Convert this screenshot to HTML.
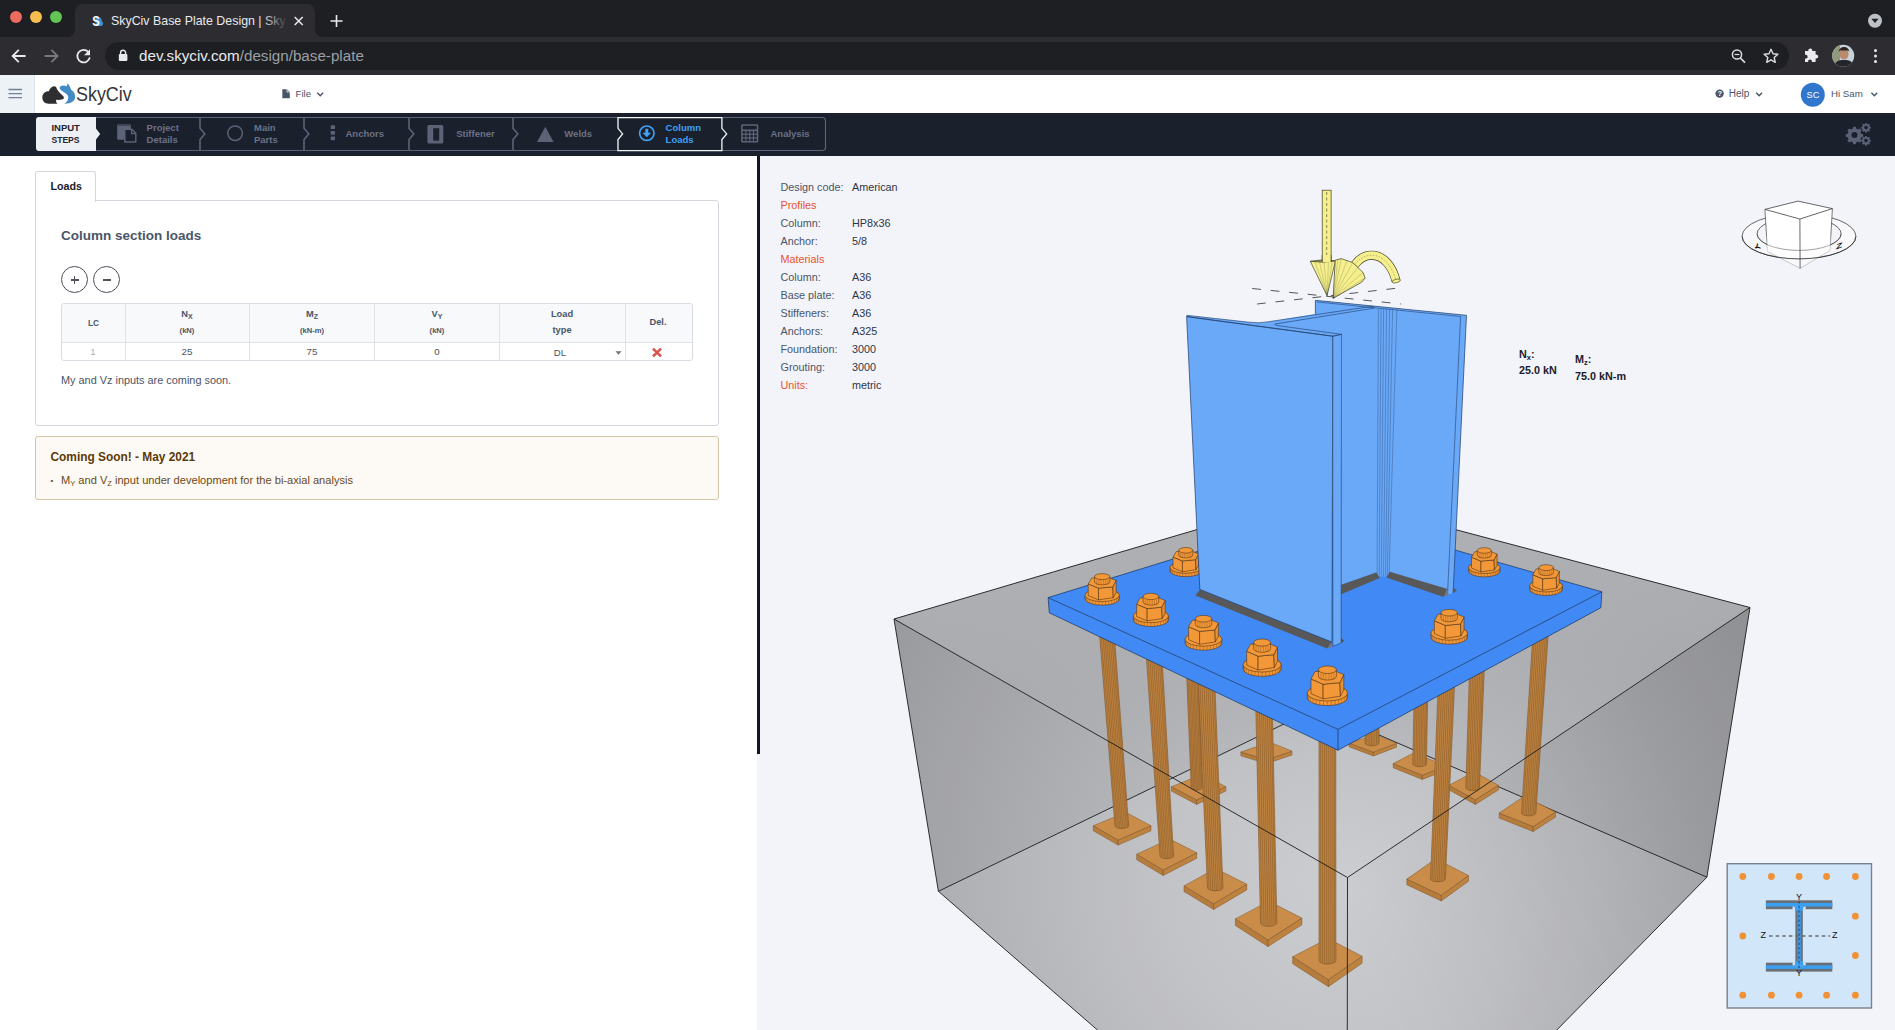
<!DOCTYPE html>
<html lang="en">
<head>
<meta charset="utf-8">
<title>SkyCiv Base Plate Design | SkyCiv</title>
<style>
*{box-sizing:border-box;margin:0;padding:0}
html,body{width:1895px;height:1030px;overflow:hidden;background:#fff}
body{font-family:"Liberation Sans","DejaVu Sans",sans-serif;color:#2d3748;position:relative}
.abs{position:absolute}
.t{position:absolute;white-space:nowrap;line-height:1}
/* browser chrome */
#frame{left:0;top:0;width:1895px;height:37px;background:#1e1f22}
#tab{left:75px;top:4px;width:240px;height:33px;background:#2d2d31;border-radius:8px 8px 0 0}
#toolbar{left:0;top:37px;width:1895px;height:38px;background:#2d2d31}
#omni{left:105px;top:42px;width:1683.5px;height:28px;border-radius:14px;background:#1e1f22}
.tl{position:absolute;top:11px;width:12px;height:12px;border-radius:50%}
/* app header */
#hdr{left:0;top:75px;width:1895px;height:38px;background:#fff}
#ham{left:0;top:75px;width:35px;height:38px;background:#edf2f7;border-right:1px solid #dbe2ea}
#steps{left:0;top:113px;width:1895px;height:43px;background:#1a202c}
/* panels */
#left{left:0;top:156px;width:757px;height:874px;background:#fff}
#right{left:757px;top:156px;width:1138px;height:874px;background:#f3f4f9}
#vbar{left:757px;top:156px;width:3px;height:598px;background:#111722}
</style>
</head>
<body>
<!-- ===== browser chrome ===== -->
<div id="frame" class="abs"></div>
<div class="tl" style="left:10px;background:#ed6a5e"></div>
<div class="tl" style="left:30px;background:#f4bf4f"></div>
<div class="tl" style="left:50px;background:#61c554"></div>
<div id="tab" class="abs"></div>
<div id="toolbar" class="abs"></div>
<div id="omni" class="abs"></div>
<!--CHROME-ICONS-->
<svg class="abs" style="left:0;top:0" width="1895" height="75" viewBox="0 0 1895 75">
 <!-- tab foot curves -->
 <path d="M67 37h8v-8a8 8 0 0 1-8 8z" fill="#2d2d31"/><path d="M323 37h-8v-8a8 8 0 0 0 8 8z" fill="#2d2d31"/>
 <!-- favicon -->
 <path d="M95.300 18.200c1.500-1.600 4.200-1.700 5.400-.2.800 1 1 2.200 1.200 3 1.200 1 1.500 2.800.8 4-.6 1-1.600 1.100-2.600 1.100h-4.500z" fill="#3d8fd1"/>
 <text x="92.300" y="26" font-family="Liberation Sans, sans-serif" font-weight="700" font-size="14" fill="#fff" transform="translate(92.300 0) scale(.8 1) translate(-92.300 0)">S</text>
 <!-- tab title -->
 <defs><linearGradient id="fd" x1="0" x2="1"><stop offset="0" stop-color="#2d2d31" stop-opacity="0"/><stop offset="1" stop-color="#2d2d31"/></linearGradient></defs>
 <text x="111" y="25.2" font-family="Liberation Sans, sans-serif" font-size="12.4" fill="#e8eaed">SkyCiv Base Plate Design | Sky</text>
 <rect x="262" y="10" width="26" height="22" fill="url(#fd)"/>
 <path d="M294.7 17l8 8M302.7 17l-8 8" stroke="#e8eaed" stroke-width="1.5"/>
 <path d="M330.5 21h12M336.5 15v12" stroke="#e8eaed" stroke-width="1.6"/>
 <!-- tab search -->
 <circle cx="1875" cy="20.8" r="7" fill="#bdc1c6"/><path d="M1871.4 18.8h7.2l-3.6 4.2z" fill="#1e1f22"/>
 <!-- back -->
 <path d="M25.6 56H13M18.8 49.8L12.6 56l6.2 6.2" stroke="#e8eaed" stroke-width="1.8" fill="none"/>
 <!-- forward -->
 <path d="M44.6 56h12.6M51.4 49.8l6.2 6.2-6.2 6.2" stroke="#77787c" stroke-width="1.8" fill="none"/>
 <!-- reload -->
 <path d="M88.2 51.8a6.3 6.3 0 1 0 1.6 5.6" stroke="#e8eaed" stroke-width="1.8" fill="none"/><path d="M90 49.3v6h-6z" fill="#e8eaed"/>
 <!-- lock -->
 <rect x="118.8" y="54" width="8.6" height="7" rx="1" fill="#e8eaed"/><path d="M120.6 54.5v-1.8a2.5 2.5 0 0 1 5 0v1.8" stroke="#e8eaed" stroke-width="1.4" fill="none"/>
 <text x="139" y="60.8" font-family="Liberation Sans, sans-serif" font-size="15.2" fill="#e8eaed">dev.skyciv.com<tspan fill="#9aa0a6">/design/base-plate</tspan></text>
 <!-- zoom icon -->
 <circle cx="1737" cy="54.5" r="4.6" stroke="#dadce0" stroke-width="1.5" fill="none"/><path d="M1740.4 58l4.6 4.6" stroke="#dadce0" stroke-width="1.7"/><path d="M1734.6 54.5h4.8" stroke="#dadce0" stroke-width="1.2"/>
 <!-- star -->
 <path d="M1771 49.2l2 4.5 4.9.5-3.7 3.3 1.1 4.8-4.3-2.5-4.3 2.5 1.1-4.8-3.7-3.3 4.9-.5z" stroke="#dadce0" stroke-width="1.4" fill="none" stroke-linejoin="round"/>
 <!-- puzzle -->
 <path d="M1805 51h3.4a2 2 0 1 1 3.8 0h3.4v3.6a2 2 0 1 1 0 3.8V62h-3.8a1.9 1.9 0 1 0-3.6 0H1805v-3.4a2 2 0 1 0 0-3.8z" fill="#e8eaed"/>
 <!-- avatar -->
 <defs><clipPath id="av"><circle cx="1843.2" cy="55.7" r="11"/></clipPath></defs>
 <g clip-path="url(#av)"><rect x="1832" y="44" width="23" height="24" fill="#c9d3dc"/><rect x="1832" y="44" width="8" height="24" fill="#8e9a7b"/><ellipse cx="1844" cy="54" rx="4.6" ry="5.6" fill="#b98a6d"/><path d="M1838.6 52a5.4 5 0 0 1 10.8 0l-1-1.5h-8.8z" fill="#2b2420"/><path d="M1834 68c0-6 4-8 10-8s10 2 10 8z" fill="#23252b"/></g>
 <circle cx="1875.5" cy="50.5" r="1.5" fill="#e8eaed"/><circle cx="1875.5" cy="56" r="1.5" fill="#e8eaed"/><circle cx="1875.5" cy="61.5" r="1.5" fill="#e8eaed"/>
</svg>
<!--/CHROME-ICONS-->
<!-- ===== app header ===== -->
<div id="hdr" class="abs"></div>
<div id="ham" class="abs"></div>
<!--HEADER-->
<svg class="abs" style="left:0;top:75px" width="1895" height="38" viewBox="0 75 1895 38">
 <path d="M8.5 89.5h13.5M8.5 93.6h13.5M8.5 97.7h13.5" stroke="#718096" stroke-width="1.3"/>
 <!-- logo cloud -->
 <g transform="translate(36 78) scale(.05488)">
  <path d="M325 150C290 150 250 190 235 240C170 235 115 285 115 350C115 420 160 468 230 468L390 468C365 440 355 420 372 398C420 405 480 400 505 375C515 360 505 335 485 320C440 285 385 230 365 165C355 150 340 148 325 150Z" fill="#2f2f31"/>
  <path d="M575 95C600 120 630 170 640 215C690 245 720 300 712 360C700 430 640 465 515 468C560 440 590 400 588 350C585 300 540 275 490 245C450 222 425 200 432 175C440 140 500 125 555 150C570 135 575 115 575 95Z" fill="#428bc6"/>
 </g>
 <text transform="translate(76 101.300) scale(.915 1)" font-family="Liberation Sans, sans-serif" font-size="19.600" fill="#333538">SkyCiv</text>
 <!-- file -->
 <path d="M282.300 89.200h4.700l2.800 2.800v6.200h-7.500z" fill="#4a5568"/><path d="M287 89.200v2.800h2.800" fill="none" stroke="#fff" stroke-width=".8"/>
 <text x="295.600" y="97.300" font-family="Liberation Sans, sans-serif" font-size="9.600" fill="#4a5568">File</text>
 <path d="M317.300 92.800l2.900 2.900 2.900-2.900" stroke="#4a5568" stroke-width="1.500" fill="none"/>
 <!-- help -->
 <circle cx="1719.600" cy="93.600" r="4.200" fill="#4a5568"/><text x="1717.500" y="96.300" font-family="Liberation Sans, sans-serif" font-weight="700" font-size="7.400" fill="#fff">?</text>
 <text x="1728.700" y="97.300" font-family="Liberation Sans, sans-serif" font-size="10" fill="#4a5568">Help</text>
 <path d="M1756.200 92.800l2.900 2.900 2.900-2.900" stroke="#4a5568" stroke-width="1.500" fill="none"/>
 <circle cx="1812.800" cy="94.800" r="12" fill="#2f76cc"/><text x="1806.600" y="98" font-family="Liberation Sans, sans-serif" font-size="9.200" fill="#fff">SC</text>
 <text x="1831" y="97.300" font-family="Liberation Sans, sans-serif" font-size="9.700" fill="#4a5568">Hi Sam</text>
 <path d="M1871.400 92.800l2.900 2.900 2.900-2.900" stroke="#4a5568" stroke-width="1.500" fill="none"/>
</svg>
<!--/HEADER-->
<div id="steps" class="abs"></div>
<!--STEPS-->
<svg class="abs" style="left:0;top:113px" width="1895" height="43" viewBox="0 113 1895 43" font-family="Liberation Sans, sans-serif" font-weight="700" font-size="9.500">
 <path d="M96 117.500H822.500a3 3 0 0 1 3 3V147.500a3 3 0 0 1-3 3H96" stroke="#5d6377" stroke-width="1.200" fill="none"/>
 <path d="M39 117H96V128.400L100.200 133.900L96 139.400V151H39a3 3 0 0 1-3-3V120a3 3 0 0 1 3-3z" fill="#eceff3"/>
 <text x="51.400" y="131" fill="#1f2430">INPUT</text><text x="51.400" y="142.900" fill="#1f2430" textLength="28.200" lengthAdjust="spacingAndGlyphs">STEPS</text>
 <path d="M200 117.500V128.300L204.8 133.900L200 139.500V150.500" stroke="#5d6377" stroke-width="1.6" fill="none" stroke-linejoin="miter"/><path d="M304 117.500V128.300L308.8 133.900L304 139.500V150.500" stroke="#5d6377" stroke-width="1.6" fill="none" stroke-linejoin="miter"/><path d="M409 117.500V128.300L413.8 133.900L409 139.500V150.500" stroke="#5d6377" stroke-width="1.6" fill="none" stroke-linejoin="miter"/><path d="M513 117.500V128.300L517.8 133.900L513 139.500V150.500" stroke="#5d6377" stroke-width="1.6" fill="none" stroke-linejoin="miter"/>
 <!-- project details -->
 <rect x="117.200" y="124.200" width="13.600" height="15.600" rx="1" fill="#5d6377"/>
 <path d="M124.800 129.200h7l4 4v8.800h-11z" fill="#1a202c" stroke="#5d6377" stroke-width="1.400" stroke-linejoin="round"/><path d="M131.600 129.400v4.200h4.200" fill="none" stroke="#5d6377" stroke-width="1.400"/>
 <rect x="118" y="124.600" width="12" height="1.200" fill="#1a202c" opacity=".55"/>
 <text x="146.600" y="131" fill="#6b7187">Project</text><text x="146.600" y="142.900" fill="#6b7187">Details</text>
 <!-- main parts -->
 <circle cx="235.100" cy="133.200" r="7.300" stroke="#5d6377" stroke-width="1.500" fill="none"/>
 <text x="254" y="131" fill="#6b7187">Main</text><text x="254" y="142.900" fill="#6b7187">Parts</text>
 <!-- anchors -->
 <rect x="330.700" y="125.300" width="4.300" height="3.800" rx=".6" fill="#5d6377"/><rect x="330.700" y="130.900" width="4.300" height="3.800" rx=".6" fill="#5d6377"/><rect x="330.700" y="136.400" width="4.300" height="3.800" rx=".6" fill="#5d6377"/>
 <text x="345.500" y="136.900" fill="#6b7187">Anchors</text>
 <!-- stiffener -->
 <rect x="427.400" y="125" width="15.900" height="18.600" rx="1.600" fill="#5d6377"/><rect x="433.200" y="128.200" width="6" height="12.400" fill="#1a202c"/>
 <text x="456.200" y="136.900" fill="#6b7187">Stiffener</text>
 <!-- welds -->
 <path d="M545.300 126.800L553.600 142H537z" fill="#5d6377"/>
 <text x="564.300" y="136.900" fill="#6b7187">Welds</text>
 <!-- column loads (active) -->
 <path d="M618 117.600H721.900V128.300L726.700 133.900L721.900 139.500V150.600H618V139.500L622.600 133.900L618 128.300Z" fill="#1a202c" stroke="#f4f6f8" stroke-width="1.300" stroke-linejoin="miter"/>
 <circle cx="646.800" cy="133.200" r="7.200" stroke="#3fa2f4" stroke-width="1.700" fill="none"/>
 <path d="M645.300 128.800h3v4h2.900l-4.400 4.500-4.400-4.500h2.900z" fill="#3fa2f4"/>
 <text x="665.600" y="131" fill="#3fa2f4">Column</text><text x="665.600" y="142.900" fill="#3fa2f4">Loads</text>
 <!-- analysis -->
 <rect x="741.100" y="124.200" width="17.200" height="18.400" rx="1.400" fill="#5d6377"/>
 <rect x="742.700" y="125.800" width="14" height="3.600" fill="#1a202c"/>
 <g fill="#1a202c"><rect x="742.700" y="131.200" width="2.600" height="2.400"/><rect x="746.500" y="131.200" width="2.600" height="2.400"/><rect x="750.300" y="131.200" width="2.600" height="2.400"/><rect x="754.100" y="131.200" width="2.600" height="2.400"/>
 <rect x="742.700" y="134.900" width="2.600" height="2.400"/><rect x="746.500" y="134.900" width="2.600" height="2.400"/><rect x="750.300" y="134.900" width="2.600" height="2.400"/><rect x="754.100" y="134.900" width="2.600" height="2.400"/>
 <rect x="742.700" y="138.600" width="2.600" height="2.400"/><rect x="746.500" y="138.600" width="2.600" height="2.400"/><rect x="750.300" y="138.600" width="2.600" height="2.400"/><rect x="754.100" y="138.600" width="2.600" height="2.400"/></g>
 <text x="770.500" y="136.900" fill="#6b7187">Analysis</text>
 <!-- gears -->
 <g fill="#5a6075">
  <g transform="translate(1854.500 135)"><path d="M-1.300-8.200h2.600l.5 2 1.700.7 1.800-1.100 1.800 1.800-1.100 1.800.7 1.700 2 .5v2.600l-2 .5-.7 1.700 1.100 1.800-1.800 1.800-1.800-1.100-1.700.7-.5 2h-2.600l-.5-2-1.700-.7-1.800 1.100-1.800-1.800 1.100-1.800-.7-1.700-2-.5v-2.600l2-.5.7-1.700-1.100-1.800 1.800-1.800 1.800 1.100 1.700-.7z"/><circle r="3" fill="#1a202c"/></g>
  <g transform="translate(1866 127.500) scale(.56)"><path d="M-1.300-8.200h2.600l.5 2 1.700.7 1.800-1.100 1.800 1.800-1.100 1.800.7 1.700 2 .5v2.600l-2 .5-.7 1.700 1.100 1.800-1.800 1.800-1.800-1.100-1.700.7-.5 2h-2.600l-.5-2-1.700-.7-1.800 1.100-1.800-1.800 1.100-1.800-.7-1.700-2-.5v-2.600l2-.5.7-1.700-1.100-1.800 1.800-1.800 1.800 1.100 1.700-.7z"/><circle r="3.200" fill="#1a202c"/></g>
  <g transform="translate(1866 140.500) scale(.56)"><path d="M-1.300-8.200h2.600l.5 2 1.700.7 1.800-1.100 1.800 1.800-1.100 1.800.7 1.700 2 .5v2.600l-2 .5-.7 1.700 1.100 1.800-1.800 1.800-1.800-1.100-1.700.7-.5 2h-2.600l-.5-2-1.700-.7-1.800 1.100-1.800-1.800 1.100-1.800-.7-1.700-2-.5v-2.600l2-.5.7-1.700-1.100-1.800 1.800-1.800 1.800 1.100 1.700-.7z"/><circle r="3.200" fill="#1a202c"/></g>
 </g>
</svg>
<!--/STEPS-->
<!-- ===== panels ===== -->
<div id="left" class="abs"></div>
<div id="right" class="abs"></div>
<!--LEFT-->
<style>
.bx{position:absolute;border:1px solid #d3d7dd;background:#fff}
#tbl{position:absolute;left:61px;top:303px;width:632px;height:58px;border:1px solid #d9dde3;border-radius:3px;background:#fff;overflow:hidden}
#tbl .hd{position:absolute;left:0;top:0;width:100%;height:39px;background:#f7f9fb;border-bottom:1px solid #dfe3e8}
#tbl .vs{position:absolute;top:0;width:1px;height:58px;background:#dfe3e8}
.th{position:absolute;font-weight:700;font-size:9.3px;color:#4a5568;text-align:center;line-height:1;white-space:nowrap;transform:translateX(-50%)}
.th small{font-size:7.6px;font-weight:700}
.th sub{font-size:7px;vertical-align:-2px;line-height:0}
.td{position:absolute;font-size:9.800px;color:#4a5568;line-height:1;white-space:nowrap;transform:translateX(-50%)}
.cb{position:absolute;top:266px;width:27px;height:27px;border:1px solid #4a4f57;border-radius:50%;background:#fff}
.cb i{position:absolute;background:#50555d}
</style>
<div class="bx" style="left:35px;top:171px;width:61px;height:31px;border-radius:3px 3px 0 0;border-bottom:none;z-index:2"></div>
<div class="bx" style="left:35px;top:200px;width:684px;height:226px;border-radius:0 3px 3px 3px"></div>
<div class="abs" style="left:36px;top:199px;width:59px;height:3px;background:#fff;z-index:3"></div>
<div class="t" style="left:50.5px;top:181px;font-size:10.7px;font-weight:700;color:#1a202c;z-index:4">Loads</div>
<div class="t" style="left:61px;top:228.600px;font-size:13.5px;font-weight:700;color:#4a5568">Column section loads</div>
<div class="cb" style="left:61px"><i style="left:8.5px;top:12px;width:8px;height:1.6px"></i><i style="left:11.7px;top:8.8px;width:1.6px;height:8px"></i></div>
<div class="cb" style="left:93px"><i style="left:8.5px;top:12px;width:8px;height:1.6px"></i></div>
<div id="tbl">
 <div class="hd"></div>
 <div class="vs" style="left:63px"></div><div class="vs" style="left:187px"></div><div class="vs" style="left:312px"></div><div class="vs" style="left:437px"></div><div class="vs" style="left:563px"></div>
</div>
<div class="th" style="left:93.5px;top:318.500px;font-size:8.400px">LC</div>
<div class="th" style="left:187px;top:310px">N<sub>X</sub></div><div class="th" style="left:187px;top:326.400px"><small>(kN)</small></div>
<div class="th" style="left:312px;top:310px">M<sub>Z</sub></div><div class="th" style="left:312px;top:326.400px"><small>(kN-m)</small></div>
<div class="th" style="left:437px;top:310px">V<sub>Y</sub></div><div class="th" style="left:437px;top:326.400px"><small>(kN)</small></div>
<div class="th" style="left:562px;top:310px">Load</div><div class="th" style="left:562px;top:326px">type</div>
<div class="th" style="left:658px;top:318px">Del.</div>
<div class="td" style="left:93px;top:347px;color:#a0aec0;font-size:9.5px">1</div>
<div class="td" style="left:187px;top:346.600px">25</div>
<div class="td" style="left:312px;top:346.5px">75</div>
<div class="td" style="left:437px;top:346.5px">0</div>
<div class="td" style="left:560px;top:347.5px;font-size:9.6px">DL</div>
<svg class="abs" style="left:615px;top:351px" width="7" height="4" viewBox="0 0 7 4"><path d="M0.5 0.3h6l-3 3.4z" fill="#6b7280"/></svg>
<svg class="abs" style="left:651px;top:346.5px" width="12" height="11" viewBox="0 0 12 11"><path d="M2 1.6L10 9.4M10 1.6L2 9.4" stroke="#d9534f" stroke-width="2.6" stroke-linecap="butt"/></svg>
<div class="t" style="left:61px;top:374.5px;font-size:10.9px;color:#4a5568">My and Vz inputs are coming soon.</div>
<div class="bx" style="left:35px;top:436px;width:684px;height:64px;border-radius:3px;background:#fdf9f4;border-color:#d6c4a6"></div>
<div class="t" style="left:50.500px;top:451.800px;font-size:11.9px;font-weight:700;color:#5b3a08">Coming Soon! - May 2021</div>
<div class="t" style="left:50.500px;top:475px;font-size:11.100px;color:#6b4a18"><span style="font-size:8px;vertical-align:1px;margin-right:1.500px">•</span>&nbsp;&nbsp;M<sub style="font-size:7.5px;vertical-align:-2px;line-height:0">Y</sub> and V<sub style="font-size:7.5px;vertical-align:-2px;line-height:0">Z</sub> input under development for the bi-axial analysis</div>
<!--/LEFT-->
<!--SCENE--><svg class="abs" style="left:757px;top:156px" width="1138" height="874" viewBox="757 156 1138 874" font-family="Liberation Sans, sans-serif">
<defs>
<radialGradient id="gRad" gradientUnits="userSpaceOnUse" cx="1345" cy="880" r="520"><stop offset="0" stop-color="#c9cace"/><stop offset=".35" stop-color="#bfc0c4"/><stop offset=".7" stop-color="#aeafb3"/><stop offset="1" stop-color="#9fa0a4"/></radialGradient>
<linearGradient id="gDk" gradientUnits="userSpaceOnUse" x1="1360" y1="960" x2="1700" y2="800"><stop offset="0" stop-color="#000" stop-opacity="0"/><stop offset="1" stop-color="#000" stop-opacity=".085"/></linearGradient>
<linearGradient id="gTop" gradientUnits="userSpaceOnUse" x1="1347" y1="877" x2="1325" y2="560"><stop offset="0" stop-color="#aeafb3" stop-opacity="0"/><stop offset=".4" stop-color="#aeafb3" stop-opacity=".15"/><stop offset=".75" stop-color="#aeafb3" stop-opacity=".8"/><stop offset="1" stop-color="#aeafb3" stop-opacity="1"/></linearGradient>
</defs>
<polygon points="894.0,619.0 1319.0,493.5 1750.0,607.5 1706.9,877.2 1466.7,1121.7 1347.0,1250.0 1192.8,1113.2 938.4,891.3" fill="url(#gRad)"/>
<polygon points="894.0,619.0 1319.0,493.5 1317.0,708.0 938.4,891.3" fill="#000" opacity=".035"/>
<polygon points="1319.0,493.5 1750.0,607.5 1706.9,877.2 1317.0,708.0" fill="#000" opacity=".035"/>
<polygon points="938.4,891.3 1317.0,708.0 1706.9,877.2 1466.7,1121.7 1347.0,1250.0 1192.8,1113.2" fill="#fff" opacity=".06"/>
<polygon points="894.0,619.0 1319.0,493.5 1750.0,607.5 1347.5,877.5" fill="url(#gTop)"/>
<polygon points="1347.5,877.5 1750.0,607.5 1706.9,877.2 1466.7,1121.7 1347.0,1250.0" fill="url(#gDk)"/>
<g><path d="M938.4,891.3L1317.0,708.0" stroke="#1c1c1c" stroke-width="0.9" fill="none"/><path d="M1706.9,877.2L1317.0,708.0" stroke="#1c1c1c" stroke-width="0.9" fill="none"/><polygon points="1240.9,752.0 1266.5,759.8 1266.5,763.6 1240.9,755.8" fill="#b57c3c" stroke="#7d5326" stroke-width=".5"/><polygon points="1266.5,759.8 1292.0,751.2 1292.0,755.0 1266.5,763.6" fill="#bd8240" stroke="#7d5326" stroke-width=".5"/><polygon points="1240.9,752.0 1266.5,759.8 1292.0,751.2 1269.8,742.1" fill="#c98d49" stroke="#7d5326" stroke-width=".5"/><path d="M1262.0,734.0L1272.0,734.0L1272.0,752.0A5.0,2.0 0 0 1 1262.0,752.0Z" fill="#c08440" stroke="#7d5326" stroke-width=".6"/><path d="M1263.0,734.0L1263.0,752.6" stroke="#6b4720" stroke-width=".5" opacity=".75" fill="none"/><path d="M1264.2,734.0L1264.2,753.3" stroke="#6b4720" stroke-width=".5" opacity=".75" fill="none"/><path d="M1265.4,734.0L1265.4,753.8" stroke="#6b4720" stroke-width=".5" opacity=".75" fill="none"/><path d="M1266.6,734.0L1266.6,754.0" stroke="#6b4720" stroke-width=".5" opacity=".75" fill="none"/><path d="M1267.8,734.0L1267.8,753.9" stroke="#6b4720" stroke-width=".5" opacity=".75" fill="none"/><path d="M1269.0,734.0L1269.0,753.6" stroke="#6b4720" stroke-width=".5" opacity=".75" fill="none"/><path d="M1270.2,734.0L1270.2,753.1" stroke="#6b4720" stroke-width=".5" opacity=".75" fill="none"/><path d="M1271.2,734.0L1271.2,752.5" stroke="#6b4720" stroke-width=".5" opacity=".75" fill="none"/>
<polygon points="1349.0,743.0 1373.4,752.2 1373.4,756.0 1349.0,746.8" fill="#b57c3c" stroke="#7d5326" stroke-width=".5"/><polygon points="1373.4,752.2 1396.5,743.4 1396.5,747.2 1373.4,756.0" fill="#bd8240" stroke="#7d5326" stroke-width=".5"/><polygon points="1349.0,743.0 1373.4,752.2 1396.5,743.4 1376.0,734.7" fill="#c98d49" stroke="#7d5326" stroke-width=".5"/><path d="M1365.0,722.0L1379.0,722.0L1379.0,743.0A7.0,2.8 0 0 1 1365.0,743.0Z" fill="#c08440" stroke="#7d5326" stroke-width=".6"/><path d="M1366.4,722.0L1366.4,743.9" stroke="#6b4720" stroke-width=".5" opacity=".75" fill="none"/><path d="M1368.1,722.0L1368.1,744.8" stroke="#6b4720" stroke-width=".5" opacity=".75" fill="none"/><path d="M1369.8,722.0L1369.8,745.5" stroke="#6b4720" stroke-width=".5" opacity=".75" fill="none"/><path d="M1371.4,722.0L1371.4,745.8" stroke="#6b4720" stroke-width=".5" opacity=".75" fill="none"/><path d="M1373.1,722.0L1373.1,745.7" stroke="#6b4720" stroke-width=".5" opacity=".75" fill="none"/><path d="M1374.8,722.0L1374.8,745.3" stroke="#6b4720" stroke-width=".5" opacity=".75" fill="none"/><path d="M1376.5,722.0L1376.5,744.5" stroke="#6b4720" stroke-width=".5" opacity=".75" fill="none"/><path d="M1377.9,722.0L1377.9,743.7" stroke="#6b4720" stroke-width=".5" opacity=".75" fill="none"/>
<polygon points="1393.2,763.6 1422.3,775.2 1422.3,779.4 1393.2,767.8" fill="#b57c3c" stroke="#7d5326" stroke-width=".5"/><polygon points="1422.3,775.2 1446.0,766.0 1446.0,770.2 1422.3,779.4" fill="#bd8240" stroke="#7d5326" stroke-width=".5"/><polygon points="1393.2,763.6 1422.3,775.2 1446.0,766.0 1414.0,752.7" fill="#c98d49" stroke="#7d5326" stroke-width=".5"/><path d="M1414.2,692.0L1427.8,692.0L1426.4,764.0A6.8,2.7 0 0 1 1412.8,764.0Z" fill="#c08440" stroke="#7d5326" stroke-width=".6"/><path d="M1415.6,692.0L1414.2,764.8" stroke="#6b4720" stroke-width=".5" opacity=".75" fill="none"/><path d="M1417.2,692.0L1415.8,765.7" stroke="#6b4720" stroke-width=".5" opacity=".75" fill="none"/><path d="M1418.8,692.0L1417.4,766.4" stroke="#6b4720" stroke-width=".5" opacity=".75" fill="none"/><path d="M1420.5,692.0L1419.1,766.7" stroke="#6b4720" stroke-width=".5" opacity=".75" fill="none"/><path d="M1422.1,692.0L1420.7,766.6" stroke="#6b4720" stroke-width=".5" opacity=".75" fill="none"/><path d="M1423.7,692.0L1422.3,766.2" stroke="#6b4720" stroke-width=".5" opacity=".75" fill="none"/><path d="M1425.4,692.0L1424.0,765.5" stroke="#6b4720" stroke-width=".5" opacity=".75" fill="none"/><path d="M1426.7,692.0L1425.3,764.7" stroke="#6b4720" stroke-width=".5" opacity=".75" fill="none"/>
<polygon points="1171.4,786.7 1196.7,800.0 1196.7,804.4 1171.4,791.1" fill="#b57c3c" stroke="#7d5326" stroke-width=".5"/><polygon points="1196.7,800.0 1225.8,786.7 1225.8,791.1 1196.7,804.4" fill="#bd8240" stroke="#7d5326" stroke-width=".5"/><polygon points="1171.4,786.7 1196.7,800.0 1225.8,786.7 1202.1,774.5" fill="#c98d49" stroke="#7d5326" stroke-width=".5"/><path d="M1186.4,668.0L1198.8,668.0L1202.1,788.0A5.4,2.2 0 0 1 1191.2,788.0Z" fill="#c08440" stroke="#7d5326" stroke-width=".6"/><path d="M1187.6,668.0L1192.3,788.7" stroke="#6b4720" stroke-width=".5" opacity=".75" fill="none"/><path d="M1189.1,668.0L1193.6,789.4" stroke="#6b4720" stroke-width=".5" opacity=".75" fill="none"/><path d="M1190.6,668.0L1194.9,789.9" stroke="#6b4720" stroke-width=".5" opacity=".75" fill="none"/><path d="M1192.1,668.0L1196.2,790.2" stroke="#6b4720" stroke-width=".5" opacity=".75" fill="none"/><path d="M1193.6,668.0L1197.5,790.1" stroke="#6b4720" stroke-width=".5" opacity=".75" fill="none"/><path d="M1195.1,668.0L1198.8,789.8" stroke="#6b4720" stroke-width=".5" opacity=".75" fill="none"/><path d="M1196.6,668.0L1200.1,789.2" stroke="#6b4720" stroke-width=".5" opacity=".75" fill="none"/><path d="M1197.8,668.0L1201.2,788.5" stroke="#6b4720" stroke-width=".5" opacity=".75" fill="none"/>
<polygon points="1449.0,785.3 1475.3,799.8 1475.3,804.4 1449.0,789.9" fill="#b57c3c" stroke="#7d5326" stroke-width=".5"/><polygon points="1475.3,799.8 1498.4,785.3 1498.4,789.9 1475.3,804.4" fill="#bd8240" stroke="#7d5326" stroke-width=".5"/><polygon points="1449.0,785.3 1475.3,799.8 1498.4,785.3 1474.0,771.7" fill="#c98d49" stroke="#7d5326" stroke-width=".5"/><path d="M1469.9,657.0L1484.8,657.0L1479.4,788.0A6.8,2.7 0 0 1 1465.8,788.0Z" fill="#c08440" stroke="#7d5326" stroke-width=".6"/><path d="M1471.4,657.0L1467.2,788.8" stroke="#6b4720" stroke-width=".5" opacity=".75" fill="none"/><path d="M1473.2,657.0L1468.8,789.7" stroke="#6b4720" stroke-width=".5" opacity=".75" fill="none"/><path d="M1475.0,657.0L1470.4,790.4" stroke="#6b4720" stroke-width=".5" opacity=".75" fill="none"/><path d="M1476.8,657.0L1472.1,790.7" stroke="#6b4720" stroke-width=".5" opacity=".75" fill="none"/><path d="M1478.5,657.0L1473.7,790.6" stroke="#6b4720" stroke-width=".5" opacity=".75" fill="none"/><path d="M1480.3,657.0L1475.3,790.2" stroke="#6b4720" stroke-width=".5" opacity=".75" fill="none"/><path d="M1482.1,657.0L1477.0,789.5" stroke="#6b4720" stroke-width=".5" opacity=".75" fill="none"/><path d="M1483.6,657.0L1478.3,788.7" stroke="#6b4720" stroke-width=".5" opacity=".75" fill="none"/>
<polygon points="1499.2,813.1 1533.2,826.5 1533.2,831.5 1499.2,818.1" fill="#b57c3c" stroke="#7d5326" stroke-width=".5"/><polygon points="1533.2,826.5 1555.5,812.0 1555.5,817.0 1533.2,831.5" fill="#bd8240" stroke="#7d5326" stroke-width=".5"/><polygon points="1499.2,813.1 1533.2,826.5 1555.5,812.0 1524.2,796.2" fill="#c98d49" stroke="#7d5326" stroke-width=".5"/><path d="M1533.8,620.0L1549.2,620.0L1535.9,813.0A7.2,2.9 0 0 1 1521.5,813.0Z" fill="#c08440" stroke="#7d5326" stroke-width=".6"/><path d="M1535.3,620.0L1522.9,813.9" stroke="#6b4720" stroke-width=".5" opacity=".75" fill="none"/><path d="M1537.2,620.0L1524.7,814.8" stroke="#6b4720" stroke-width=".5" opacity=".75" fill="none"/><path d="M1539.0,620.0L1526.4,815.5" stroke="#6b4720" stroke-width=".5" opacity=".75" fill="none"/><path d="M1540.9,620.0L1528.1,815.9" stroke="#6b4720" stroke-width=".5" opacity=".75" fill="none"/><path d="M1542.7,620.0L1529.9,815.8" stroke="#6b4720" stroke-width=".5" opacity=".75" fill="none"/><path d="M1544.6,620.0L1531.6,815.3" stroke="#6b4720" stroke-width=".5" opacity=".75" fill="none"/><path d="M1546.4,620.0L1533.3,814.5" stroke="#6b4720" stroke-width=".5" opacity=".75" fill="none"/><path d="M1548.0,620.0L1534.7,813.7" stroke="#6b4720" stroke-width=".5" opacity=".75" fill="none"/>
<polygon points="1406.8,879.1 1441.3,895.2 1441.3,900.9 1406.8,884.8" fill="#b57c3c" stroke="#7d5326" stroke-width=".5"/><polygon points="1441.3,895.2 1468.5,875.6 1468.5,881.3 1441.3,900.9" fill="#bd8240" stroke="#7d5326" stroke-width=".5"/><polygon points="1406.8,879.1 1441.3,895.2 1468.5,875.6 1435.9,858.7" fill="#c98d49" stroke="#7d5326" stroke-width=".5"/><path d="M1438.6,676.0L1455.0,676.0L1445.4,879.0A7.5,3.0 0 0 1 1430.5,879.0Z" fill="#c08440" stroke="#7d5326" stroke-width=".6"/><path d="M1440.2,676.0L1432.0,879.9" stroke="#6b4720" stroke-width=".5" opacity=".75" fill="none"/><path d="M1442.2,676.0L1433.8,880.9" stroke="#6b4720" stroke-width=".5" opacity=".75" fill="none"/><path d="M1444.2,676.0L1435.6,881.6" stroke="#6b4720" stroke-width=".5" opacity=".75" fill="none"/><path d="M1446.1,676.0L1437.4,882.0" stroke="#6b4720" stroke-width=".5" opacity=".75" fill="none"/><path d="M1448.1,676.0L1439.1,881.9" stroke="#6b4720" stroke-width=".5" opacity=".75" fill="none"/><path d="M1450.1,676.0L1440.9,881.4" stroke="#6b4720" stroke-width=".5" opacity=".75" fill="none"/><path d="M1452.0,676.0L1442.7,880.6" stroke="#6b4720" stroke-width=".5" opacity=".75" fill="none"/><path d="M1453.7,676.0L1444.2,879.7" stroke="#6b4720" stroke-width=".5" opacity=".75" fill="none"/>
<polygon points="1093.3,825.7 1118.1,840.0 1118.1,845.1 1093.3,830.8" fill="#b57c3c" stroke="#7d5326" stroke-width=".5"/><polygon points="1118.1,840.0 1151.0,825.7 1151.0,830.8 1118.1,845.1" fill="#bd8240" stroke="#7d5326" stroke-width=".5"/><polygon points="1093.3,825.7 1118.1,840.0 1151.0,825.7 1125.9,812.4" fill="#c98d49" stroke="#7d5326" stroke-width=".5"/><path d="M1099.0,628.0L1113.8,628.0L1128.7,826.0A6.9,2.7 0 0 1 1115.0,826.0Z" fill="#c08440" stroke="#7d5326" stroke-width=".6"/><path d="M1100.5,628.0L1116.4,826.8" stroke="#6b4720" stroke-width=".5" opacity=".75" fill="none"/><path d="M1102.3,628.0L1118.0,827.7" stroke="#6b4720" stroke-width=".5" opacity=".75" fill="none"/><path d="M1104.0,628.0L1119.7,828.4" stroke="#6b4720" stroke-width=".5" opacity=".75" fill="none"/><path d="M1105.8,628.0L1121.3,828.7" stroke="#6b4720" stroke-width=".5" opacity=".75" fill="none"/><path d="M1107.6,628.0L1122.9,828.7" stroke="#6b4720" stroke-width=".5" opacity=".75" fill="none"/><path d="M1109.4,628.0L1124.6,828.2" stroke="#6b4720" stroke-width=".5" opacity=".75" fill="none"/><path d="M1111.1,628.0L1126.2,827.5" stroke="#6b4720" stroke-width=".5" opacity=".75" fill="none"/><path d="M1112.6,628.0L1127.6,826.7" stroke="#6b4720" stroke-width=".5" opacity=".75" fill="none"/>
<polygon points="1136.7,854.2 1163.2,870.0 1163.2,875.5 1136.7,859.7" fill="#b57c3c" stroke="#7d5326" stroke-width=".5"/><polygon points="1163.2,870.0 1196.7,852.8 1196.7,858.3 1163.2,875.5" fill="#bd8240" stroke="#7d5326" stroke-width=".5"/><polygon points="1136.7,854.2 1163.2,870.0 1196.7,852.8 1169.7,839.0" fill="#c98d49" stroke="#7d5326" stroke-width=".5"/><path d="M1146.0,652.0L1161.7,652.0L1173.6,856.0A6.8,2.7 0 0 1 1160.0,856.0Z" fill="#c08440" stroke="#7d5326" stroke-width=".6"/><path d="M1147.6,652.0L1161.4,856.8" stroke="#6b4720" stroke-width=".5" opacity=".75" fill="none"/><path d="M1149.5,652.0L1163.0,857.7" stroke="#6b4720" stroke-width=".5" opacity=".75" fill="none"/><path d="M1151.3,652.0L1164.6,858.4" stroke="#6b4720" stroke-width=".5" opacity=".75" fill="none"/><path d="M1153.2,652.0L1166.3,858.7" stroke="#6b4720" stroke-width=".5" opacity=".75" fill="none"/><path d="M1155.1,652.0L1167.9,858.6" stroke="#6b4720" stroke-width=".5" opacity=".75" fill="none"/><path d="M1157.0,652.0L1169.5,858.2" stroke="#6b4720" stroke-width=".5" opacity=".75" fill="none"/><path d="M1158.9,652.0L1171.2,857.5" stroke="#6b4720" stroke-width=".5" opacity=".75" fill="none"/><path d="M1160.4,652.0L1172.5,856.7" stroke="#6b4720" stroke-width=".5" opacity=".75" fill="none"/>
<polygon points="1184.0,885.9 1213.6,903.8 1213.6,909.5 1184.0,891.6" fill="#b57c3c" stroke="#7d5326" stroke-width=".5"/><polygon points="1213.6,903.8 1246.8,884.2 1246.8,889.9 1213.6,909.5" fill="#bd8240" stroke="#7d5326" stroke-width=".5"/><polygon points="1184.0,885.9 1213.6,903.8 1246.8,884.2 1215.6,868.5" fill="#c98d49" stroke="#7d5326" stroke-width=".5"/><path d="M1198.0,676.0L1214.5,676.0L1223.0,888.0A7.8,3.1 0 0 1 1207.5,888.0Z" fill="#c08440" stroke="#7d5326" stroke-width=".6"/><path d="M1199.7,676.0L1209.0,889.0" stroke="#6b4720" stroke-width=".5" opacity=".75" fill="none"/><path d="M1201.6,676.0L1210.9,890.0" stroke="#6b4720" stroke-width=".5" opacity=".75" fill="none"/><path d="M1203.6,676.0L1212.8,890.7" stroke="#6b4720" stroke-width=".5" opacity=".75" fill="none"/><path d="M1205.6,676.0L1214.6,891.1" stroke="#6b4720" stroke-width=".5" opacity=".75" fill="none"/><path d="M1207.6,676.0L1216.5,891.0" stroke="#6b4720" stroke-width=".5" opacity=".75" fill="none"/><path d="M1209.5,676.0L1218.3,890.5" stroke="#6b4720" stroke-width=".5" opacity=".75" fill="none"/><path d="M1211.5,676.0L1220.2,889.7" stroke="#6b4720" stroke-width=".5" opacity=".75" fill="none"/><path d="M1213.2,676.0L1221.8,888.8" stroke="#6b4720" stroke-width=".5" opacity=".75" fill="none"/>
<polygon points="1235.4,918.9 1268.0,939.9 1268.0,946.6 1235.4,925.6" fill="#b57c3c" stroke="#7d5326" stroke-width=".5"/><polygon points="1268.0,939.9 1301.9,918.1 1301.9,924.8 1268.0,946.6" fill="#bd8240" stroke="#7d5326" stroke-width=".5"/><polygon points="1235.4,918.9 1268.0,939.9 1301.9,918.1 1268.7,901.2" fill="#c98d49" stroke="#7d5326" stroke-width=".5"/><path d="M1255.7,702.0L1272.2,702.0L1276.9,923.0A8.2,3.3 0 0 1 1260.5,923.0Z" fill="#c08440" stroke="#7d5326" stroke-width=".6"/><path d="M1257.4,702.0L1262.1,924.0" stroke="#6b4720" stroke-width=".5" opacity=".75" fill="none"/><path d="M1259.3,702.0L1264.1,925.1" stroke="#6b4720" stroke-width=".5" opacity=".75" fill="none"/><path d="M1261.3,702.0L1266.1,925.9" stroke="#6b4720" stroke-width=".5" opacity=".75" fill="none"/><path d="M1263.3,702.0L1268.0,926.3" stroke="#6b4720" stroke-width=".5" opacity=".75" fill="none"/><path d="M1265.3,702.0L1270.0,926.2" stroke="#6b4720" stroke-width=".5" opacity=".75" fill="none"/><path d="M1267.2,702.0L1272.0,925.7" stroke="#6b4720" stroke-width=".5" opacity=".75" fill="none"/><path d="M1269.2,702.0L1273.9,924.8" stroke="#6b4720" stroke-width=".5" opacity=".75" fill="none"/><path d="M1270.9,702.0L1275.6,923.8" stroke="#6b4720" stroke-width=".5" opacity=".75" fill="none"/>
<polygon points="1292.7,956.8 1328.4,979.7 1328.4,986.7 1292.7,963.8" fill="#b57c3c" stroke="#7d5326" stroke-width=".5"/><polygon points="1328.4,979.7 1362.1,956.2 1362.1,963.2 1328.4,986.7" fill="#bd8240" stroke="#7d5326" stroke-width=".5"/><polygon points="1292.7,956.8 1328.4,979.7 1362.1,956.2 1327.8,938.5" fill="#c98d49" stroke="#7d5326" stroke-width=".5"/><path d="M1319.0,732.0L1335.8,732.0L1335.9,961.0A8.5,3.4 0 0 1 1319.0,961.0Z" fill="#c08440" stroke="#7d5326" stroke-width=".6"/><path d="M1320.7,732.0L1320.7,962.0" stroke="#6b4720" stroke-width=".5" opacity=".75" fill="none"/><path d="M1322.7,732.0L1322.7,963.2" stroke="#6b4720" stroke-width=".5" opacity=".75" fill="none"/><path d="M1324.7,732.0L1324.7,964.0" stroke="#6b4720" stroke-width=".5" opacity=".75" fill="none"/><path d="M1326.7,732.0L1326.8,964.4" stroke="#6b4720" stroke-width=".5" opacity=".75" fill="none"/><path d="M1328.7,732.0L1328.8,964.3" stroke="#6b4720" stroke-width=".5" opacity=".75" fill="none"/><path d="M1330.8,732.0L1330.8,963.7" stroke="#6b4720" stroke-width=".5" opacity=".75" fill="none"/><path d="M1332.8,732.0L1332.9,962.8" stroke="#6b4720" stroke-width=".5" opacity=".75" fill="none"/><path d="M1334.5,732.0L1334.5,961.8" stroke="#6b4720" stroke-width=".5" opacity=".75" fill="none"/></g>
<g><path d="M894.0,619.0L1347.5,877.5" stroke="#1c1c1c" stroke-width="0.9" fill="none"/>
<path d="M1347.5,877.5L1750.0,607.5" stroke="#1c1c1c" stroke-width="0.9" fill="none"/>
<path d="M1347.5,877.5L1347.0,1250.0" stroke="#1c1c1c" stroke-width="0.9" fill="none"/>
<path d="M894.0,619.0L938.4,891.3" stroke="#1c1c1c" stroke-width="0.9" fill="none"/>
<path d="M1750.0,607.5L1706.9,877.2" stroke="#1c1c1c" stroke-width="0.9" fill="none"/>
<path d="M938.4,891.3L1192.8,1113.2" stroke="#1c1c1c" stroke-width="0.9" fill="none"/>
<path d="M1706.9,877.2L1466.7,1121.7" stroke="#1c1c1c" stroke-width="0.9" fill="none"/>
<path d="M894.0,619.0L1319.0,493.5" stroke="#1c1c1c" stroke-width="0.9" fill="none"/>
<path d="M1319.0,493.5L1750.0,607.5" stroke="#1c1c1c" stroke-width="0.9" fill="none"/></g>
<g><polygon points="1048.1,597.6 1338.0,729.4 1338.0,750.2 1049.3,612.8" fill="#418af6"/>
<polygon points="1338.0,729.4 1601.8,591.8 1600.9,607.7 1338.0,750.2" fill="#418af6"/>
<polygon points="1048.1,597.6 1323.6,512.6 1601.8,591.8 1338.0,729.4" fill="#418af6"/>
<path d="M1048.1,597.6L1338.0,729.4" stroke="#16325c" stroke-width="0.7" fill="none"/>
<path d="M1338.0,729.4L1601.8,591.8" stroke="#16325c" stroke-width="0.7" fill="none"/>
<path d="M1049.3,612.8L1338.0,750.2" stroke="#16325c" stroke-width="0.7" fill="none"/>
<path d="M1338.0,750.2L1600.9,607.7" stroke="#16325c" stroke-width="0.7" fill="none"/>
<path d="M1048.1,597.6L1049.3,612.8" stroke="#16325c" stroke-width="0.7" fill="none"/>
<path d="M1338.0,729.4L1338.0,750.2" stroke="#16325c" stroke-width="0.7" fill="none"/>
<path d="M1601.8,591.8L1600.9,607.7" stroke="#16325c" stroke-width="0.7" fill="none"/>
<path d="M1048.1,597.6L1323.6,512.6" stroke="#16325c" stroke-width="0.7" fill="none"/>
<path d="M1323.6,512.6L1601.8,591.8" stroke="#16325c" stroke-width="0.7" fill="none"/></g>
<g><g transform="translate(1185.8,576.7) scale(0.780 0.730)" stroke="#4a2c0c" stroke-width="0.71" stroke-linejoin="round"><path d="M-20.200,-12.600A20.200,8 0 0 1 20.200,-12.600V-8A20.200,8 0 0 1 -20.200,-8Z" fill="#f39839"/><ellipse cx="0" cy="-12.600" rx="20.200" ry="8" fill="#f39839"/><path d="M-19.8,-11.0v4.600" stroke-width="0.51" opacity=".7"/><path d="M-18.7,-9.5v4.600" stroke-width="0.51" opacity=".7"/><path d="M-16.8,-8.2v4.600" stroke-width="0.51" opacity=".7"/><path d="M-14.3,-6.9v4.600" stroke-width="0.51" opacity=".7"/><path d="M-11.2,-5.9v4.600" stroke-width="0.51" opacity=".7"/><path d="M-7.7,-5.2v4.600" stroke-width="0.51" opacity=".7"/><path d="M-3.9,-4.8v4.600" stroke-width="0.51" opacity=".7"/><path d="M-0.0,-4.6v4.600" stroke-width="0.51" opacity=".7"/><path d="M3.9,-4.8v4.600" stroke-width="0.51" opacity=".7"/><path d="M7.7,-5.2v4.600" stroke-width="0.51" opacity=".7"/><path d="M11.2,-5.9v4.600" stroke-width="0.51" opacity=".7"/><path d="M14.3,-6.9v4.600" stroke-width="0.51" opacity=".7"/><path d="M16.8,-8.2v4.600" stroke-width="0.51" opacity=".7"/><path d="M18.7,-9.5v4.600" stroke-width="0.51" opacity=".7"/><path d="M19.8,-11.0v4.600" stroke-width="0.51" opacity=".7"/><polygon points="-16.400,-26.900 -4.300,-21.600 -4.300,-6.800 -16.400,-12.100" fill="#f39839"/><polygon points="-4.300,-21.600 12.500,-23.200 13,-9.500 -4.300,-6.800" fill="#f39839"/><polygon points="12.500,-23.200 16.400,-31.300 16.400,-16 13,-9.500" fill="#e68f33"/><polygon points="-12.300,-34.500 -16.400,-26.900 -4.300,-21.600 12.500,-23.200 16.400,-31.300 9.800,-34.100" fill="#f39839"/><path d="M-9,-36.200V-29.600A9,3.800 0 0 0 9,-29.600V-36.200Z" fill="#f39839"/><path d="M-6.5,-32.500v6" stroke-width="0.51" opacity=".6"/><path d="M-4,-32.500v6" stroke-width="0.51" opacity=".6"/><path d="M-1.5,-32.500v6" stroke-width="0.51" opacity=".6"/><path d="M1.5,-32.500v6" stroke-width="0.51" opacity=".6"/><path d="M4,-32.500v6" stroke-width="0.51" opacity=".6"/><path d="M6.5,-32.500v6" stroke-width="0.51" opacity=".6"/><ellipse cx="0" cy="-36.200" rx="9" ry="3.800" fill="#f39839"/></g></g><g><path d="M1315.400,300.300L1466.500,315.300L1453.100,593L1447.500,594.600L1389.800,571.700L1389,576.400H1377.100L1376.300,572.500L1340.700,585.100L1341.500,334.300L1332.800,336.200L1186.600,316.600V315.300L1248.100,322.100Q1259.200,323.600 1268.600,321.700L1315.400,314.100Z" fill="#6aa8f8"/>
<path d="M1315.400,314.100V300.300L1466.500,315.300L1453.100,593" stroke="#1d3b66" stroke-width=".7" fill="none"/>
<path d="M1316.500,301.900L1460.600,316.500L1447.500,594.600" stroke="#1d3b66" stroke-width=".55" fill="none"/>
<path d="M1186.600,315.300L1248.100,322.100Q1259.200,323.600 1268.600,321.700L1372.300,306.300Q1374.500,306.600 1373.900,308.200L1275,324Q1273.500,325 1281.300,326.100L1341.500,334.300" stroke="#1d3b66" stroke-width=".6" fill="none"/>
<path d="M1378.4,309.0L1377.1,576.400" stroke="#1d3b66" stroke-width=".45" opacity=".75" fill="none"/>
<path d="M1381,309.1L1379.2,576.400" stroke="#1d3b66" stroke-width=".45" opacity=".75" fill="none"/>
<path d="M1383.6,309.2L1381.3,576.400" stroke="#1d3b66" stroke-width=".45" opacity=".75" fill="none"/>
<path d="M1386.6,309.3L1383.5,576.400" stroke="#1d3b66" stroke-width=".45" opacity=".75" fill="none"/>
<path d="M1389.6,309.4L1385.5,576.400" stroke="#1d3b66" stroke-width=".45" opacity=".75" fill="none"/>
<path d="M1392.6,309.5L1387.3,576.400" stroke="#1d3b66" stroke-width=".45" opacity=".75" fill="none"/>
<path d="M1396.9,309.6L1389,576.400" stroke="#1d3b66" stroke-width=".45" opacity=".75" fill="none"/>
<polygon points="1340.7,585.1 1376.3,572.5 1379.8,578.0 1340.7,594.6" fill="#585858"/>
<polygon points="1389.8,571.7 1447.5,589.1 1443.6,597.0 1386.3,577.5" fill="#585858"/>
<polygon points="1443.6,597.0 1447.5,589.1 1448.3,594.6" fill="#777"/>
<polygon points="1453.1,587.5 1457.0,590.6 1453.1,593.0" fill="#585858"/>
<polygon points="1199.8,589.4 1195.4,595.4 1327.2,648.4 1332.0,642.1" fill="#585858"/>
<polygon points="1327.2,648.4 1332.0,642.1 1332.8,646.4" fill="#777"/>
<polygon points="1340.7,637.4 1344.6,641.0 1341.1,642.9" fill="#585858"/>
<polygon points="1186.6,316.6 1332.8,336.2 1332.0,642.1 1199.8,589.4" fill="#6aa8f8" stroke="#1d3b66" stroke-width=".7"/>
<polygon points="1332.8,336.2 1341.5,334.3 1341.1,642.9 1332.8,646.4" fill="#6aa8f8" stroke="#1d3b66" stroke-width=".6"/>
<path d="M1186.600,316.600L1332.800,336.200L1341.500,334.300" stroke="#1d3b66" stroke-width=".6" fill="none"/></g>
<g><g transform="translate(1484.3,576.9) scale(0.780 0.730)" stroke="#4a2c0c" stroke-width="0.71" stroke-linejoin="round"><path d="M-20.200,-12.600A20.200,8 0 0 1 20.200,-12.600V-8A20.200,8 0 0 1 -20.200,-8Z" fill="#f39839"/><ellipse cx="0" cy="-12.600" rx="20.200" ry="8" fill="#f39839"/><path d="M-19.8,-11.0v4.600" stroke-width="0.51" opacity=".7"/><path d="M-18.7,-9.5v4.600" stroke-width="0.51" opacity=".7"/><path d="M-16.8,-8.2v4.600" stroke-width="0.51" opacity=".7"/><path d="M-14.3,-6.9v4.600" stroke-width="0.51" opacity=".7"/><path d="M-11.2,-5.9v4.600" stroke-width="0.51" opacity=".7"/><path d="M-7.7,-5.2v4.600" stroke-width="0.51" opacity=".7"/><path d="M-3.9,-4.8v4.600" stroke-width="0.51" opacity=".7"/><path d="M-0.0,-4.6v4.600" stroke-width="0.51" opacity=".7"/><path d="M3.9,-4.8v4.600" stroke-width="0.51" opacity=".7"/><path d="M7.7,-5.2v4.600" stroke-width="0.51" opacity=".7"/><path d="M11.2,-5.9v4.600" stroke-width="0.51" opacity=".7"/><path d="M14.3,-6.9v4.600" stroke-width="0.51" opacity=".7"/><path d="M16.8,-8.2v4.600" stroke-width="0.51" opacity=".7"/><path d="M18.7,-9.5v4.600" stroke-width="0.51" opacity=".7"/><path d="M19.8,-11.0v4.600" stroke-width="0.51" opacity=".7"/><polygon points="-16.400,-26.900 -4.300,-21.600 -4.300,-6.800 -16.400,-12.100" fill="#f39839"/><polygon points="-4.300,-21.600 12.500,-23.200 13,-9.500 -4.300,-6.800" fill="#f39839"/><polygon points="12.500,-23.200 16.400,-31.300 16.400,-16 13,-9.500" fill="#e68f33"/><polygon points="-12.300,-34.500 -16.400,-26.900 -4.300,-21.600 12.500,-23.200 16.400,-31.300 9.800,-34.100" fill="#f39839"/><path d="M-9,-36.200V-29.600A9,3.800 0 0 0 9,-29.600V-36.200Z" fill="#f39839"/><path d="M-6.5,-32.500v6" stroke-width="0.51" opacity=".6"/><path d="M-4,-32.500v6" stroke-width="0.51" opacity=".6"/><path d="M-1.5,-32.500v6" stroke-width="0.51" opacity=".6"/><path d="M1.5,-32.500v6" stroke-width="0.51" opacity=".6"/><path d="M4,-32.500v6" stroke-width="0.51" opacity=".6"/><path d="M6.5,-32.500v6" stroke-width="0.51" opacity=".6"/><ellipse cx="0" cy="-36.200" rx="9" ry="3.800" fill="#f39839"/></g>
<g transform="translate(1546.1,595.5) scale(0.810 0.770)" stroke="#4a2c0c" stroke-width="0.68" stroke-linejoin="round"><path d="M-20.200,-12.600A20.200,8 0 0 1 20.200,-12.600V-8A20.200,8 0 0 1 -20.200,-8Z" fill="#f39839"/><ellipse cx="0" cy="-12.600" rx="20.200" ry="8" fill="#f39839"/><path d="M-19.8,-11.0v4.600" stroke-width="0.49" opacity=".7"/><path d="M-18.7,-9.5v4.600" stroke-width="0.49" opacity=".7"/><path d="M-16.8,-8.2v4.600" stroke-width="0.49" opacity=".7"/><path d="M-14.3,-6.9v4.600" stroke-width="0.49" opacity=".7"/><path d="M-11.2,-5.9v4.600" stroke-width="0.49" opacity=".7"/><path d="M-7.7,-5.2v4.600" stroke-width="0.49" opacity=".7"/><path d="M-3.9,-4.8v4.600" stroke-width="0.49" opacity=".7"/><path d="M-0.0,-4.6v4.600" stroke-width="0.49" opacity=".7"/><path d="M3.9,-4.8v4.600" stroke-width="0.49" opacity=".7"/><path d="M7.7,-5.2v4.600" stroke-width="0.49" opacity=".7"/><path d="M11.2,-5.9v4.600" stroke-width="0.49" opacity=".7"/><path d="M14.3,-6.9v4.600" stroke-width="0.49" opacity=".7"/><path d="M16.8,-8.2v4.600" stroke-width="0.49" opacity=".7"/><path d="M18.7,-9.5v4.600" stroke-width="0.49" opacity=".7"/><path d="M19.8,-11.0v4.600" stroke-width="0.49" opacity=".7"/><polygon points="-16.400,-26.900 -4.300,-21.600 -4.300,-6.800 -16.400,-12.100" fill="#f39839"/><polygon points="-4.300,-21.600 12.500,-23.200 13,-9.500 -4.300,-6.800" fill="#f39839"/><polygon points="12.500,-23.200 16.400,-31.300 16.400,-16 13,-9.500" fill="#e68f33"/><polygon points="-12.300,-34.500 -16.400,-26.900 -4.300,-21.600 12.500,-23.200 16.400,-31.300 9.800,-34.100" fill="#f39839"/><path d="M-9,-36.200V-29.600A9,3.800 0 0 0 9,-29.600V-36.200Z" fill="#f39839"/><path d="M-6.5,-32.500v6" stroke-width="0.49" opacity=".6"/><path d="M-4,-32.500v6" stroke-width="0.49" opacity=".6"/><path d="M-1.5,-32.500v6" stroke-width="0.49" opacity=".6"/><path d="M1.5,-32.500v6" stroke-width="0.49" opacity=".6"/><path d="M4,-32.500v6" stroke-width="0.49" opacity=".6"/><path d="M6.5,-32.500v6" stroke-width="0.49" opacity=".6"/><ellipse cx="0" cy="-36.200" rx="9" ry="3.800" fill="#f39839"/></g>
<g transform="translate(1102.2,605.2) scale(0.850 0.790)" stroke="#4a2c0c" stroke-width="0.65" stroke-linejoin="round"><path d="M-20.200,-12.600A20.200,8 0 0 1 20.200,-12.600V-8A20.200,8 0 0 1 -20.200,-8Z" fill="#f39839"/><ellipse cx="0" cy="-12.600" rx="20.200" ry="8" fill="#f39839"/><path d="M-19.8,-11.0v4.600" stroke-width="0.47" opacity=".7"/><path d="M-18.7,-9.5v4.600" stroke-width="0.47" opacity=".7"/><path d="M-16.8,-8.2v4.600" stroke-width="0.47" opacity=".7"/><path d="M-14.3,-6.9v4.600" stroke-width="0.47" opacity=".7"/><path d="M-11.2,-5.9v4.600" stroke-width="0.47" opacity=".7"/><path d="M-7.7,-5.2v4.600" stroke-width="0.47" opacity=".7"/><path d="M-3.9,-4.8v4.600" stroke-width="0.47" opacity=".7"/><path d="M-0.0,-4.6v4.600" stroke-width="0.47" opacity=".7"/><path d="M3.9,-4.8v4.600" stroke-width="0.47" opacity=".7"/><path d="M7.7,-5.2v4.600" stroke-width="0.47" opacity=".7"/><path d="M11.2,-5.9v4.600" stroke-width="0.47" opacity=".7"/><path d="M14.3,-6.9v4.600" stroke-width="0.47" opacity=".7"/><path d="M16.8,-8.2v4.600" stroke-width="0.47" opacity=".7"/><path d="M18.7,-9.5v4.600" stroke-width="0.47" opacity=".7"/><path d="M19.8,-11.0v4.600" stroke-width="0.47" opacity=".7"/><polygon points="-16.400,-26.900 -4.300,-21.600 -4.300,-6.800 -16.400,-12.100" fill="#f39839"/><polygon points="-4.300,-21.600 12.500,-23.200 13,-9.500 -4.300,-6.800" fill="#f39839"/><polygon points="12.500,-23.200 16.400,-31.300 16.400,-16 13,-9.500" fill="#e68f33"/><polygon points="-12.300,-34.500 -16.400,-26.900 -4.300,-21.600 12.500,-23.200 16.400,-31.300 9.800,-34.100" fill="#f39839"/><path d="M-9,-36.200V-29.600A9,3.800 0 0 0 9,-29.600V-36.200Z" fill="#f39839"/><path d="M-6.5,-32.500v6" stroke-width="0.47" opacity=".6"/><path d="M-4,-32.500v6" stroke-width="0.47" opacity=".6"/><path d="M-1.5,-32.500v6" stroke-width="0.47" opacity=".6"/><path d="M1.5,-32.500v6" stroke-width="0.47" opacity=".6"/><path d="M4,-32.500v6" stroke-width="0.47" opacity=".6"/><path d="M6.5,-32.500v6" stroke-width="0.47" opacity=".6"/><ellipse cx="0" cy="-36.200" rx="9" ry="3.800" fill="#f39839"/></g>
<g transform="translate(1150.9,626.5) scale(0.870 0.830)" stroke="#4a2c0c" stroke-width="0.63" stroke-linejoin="round"><path d="M-20.200,-12.600A20.200,8 0 0 1 20.200,-12.600V-8A20.200,8 0 0 1 -20.200,-8Z" fill="#f39839"/><ellipse cx="0" cy="-12.600" rx="20.200" ry="8" fill="#f39839"/><path d="M-19.8,-11.0v4.600" stroke-width="0.46" opacity=".7"/><path d="M-18.7,-9.5v4.600" stroke-width="0.46" opacity=".7"/><path d="M-16.8,-8.2v4.600" stroke-width="0.46" opacity=".7"/><path d="M-14.3,-6.9v4.600" stroke-width="0.46" opacity=".7"/><path d="M-11.2,-5.9v4.600" stroke-width="0.46" opacity=".7"/><path d="M-7.7,-5.2v4.600" stroke-width="0.46" opacity=".7"/><path d="M-3.9,-4.8v4.600" stroke-width="0.46" opacity=".7"/><path d="M-0.0,-4.6v4.600" stroke-width="0.46" opacity=".7"/><path d="M3.9,-4.8v4.600" stroke-width="0.46" opacity=".7"/><path d="M7.7,-5.2v4.600" stroke-width="0.46" opacity=".7"/><path d="M11.2,-5.9v4.600" stroke-width="0.46" opacity=".7"/><path d="M14.3,-6.9v4.600" stroke-width="0.46" opacity=".7"/><path d="M16.8,-8.2v4.600" stroke-width="0.46" opacity=".7"/><path d="M18.7,-9.5v4.600" stroke-width="0.46" opacity=".7"/><path d="M19.8,-11.0v4.600" stroke-width="0.46" opacity=".7"/><polygon points="-16.400,-26.900 -4.300,-21.600 -4.300,-6.800 -16.400,-12.100" fill="#f39839"/><polygon points="-4.300,-21.600 12.500,-23.200 13,-9.500 -4.300,-6.800" fill="#f39839"/><polygon points="12.500,-23.200 16.400,-31.300 16.400,-16 13,-9.500" fill="#e68f33"/><polygon points="-12.300,-34.500 -16.400,-26.900 -4.300,-21.600 12.500,-23.200 16.400,-31.300 9.800,-34.100" fill="#f39839"/><path d="M-9,-36.200V-29.600A9,3.800 0 0 0 9,-29.600V-36.200Z" fill="#f39839"/><path d="M-6.5,-32.500v6" stroke-width="0.46" opacity=".6"/><path d="M-4,-32.500v6" stroke-width="0.46" opacity=".6"/><path d="M-1.5,-32.500v6" stroke-width="0.46" opacity=".6"/><path d="M1.5,-32.500v6" stroke-width="0.46" opacity=".6"/><path d="M4,-32.500v6" stroke-width="0.46" opacity=".6"/><path d="M6.5,-32.500v6" stroke-width="0.46" opacity=".6"/><ellipse cx="0" cy="-36.200" rx="9" ry="3.800" fill="#f39839"/></g>
<g transform="translate(1203.5,650.2) scale(0.910 0.870)" stroke="#4a2c0c" stroke-width="0.60" stroke-linejoin="round"><path d="M-20.200,-12.600A20.200,8 0 0 1 20.200,-12.600V-8A20.200,8 0 0 1 -20.200,-8Z" fill="#f39839"/><ellipse cx="0" cy="-12.600" rx="20.200" ry="8" fill="#f39839"/><path d="M-19.8,-11.0v4.600" stroke-width="0.44" opacity=".7"/><path d="M-18.7,-9.5v4.600" stroke-width="0.44" opacity=".7"/><path d="M-16.8,-8.2v4.600" stroke-width="0.44" opacity=".7"/><path d="M-14.3,-6.9v4.600" stroke-width="0.44" opacity=".7"/><path d="M-11.2,-5.9v4.600" stroke-width="0.44" opacity=".7"/><path d="M-7.7,-5.2v4.600" stroke-width="0.44" opacity=".7"/><path d="M-3.9,-4.8v4.600" stroke-width="0.44" opacity=".7"/><path d="M-0.0,-4.6v4.600" stroke-width="0.44" opacity=".7"/><path d="M3.9,-4.8v4.600" stroke-width="0.44" opacity=".7"/><path d="M7.7,-5.2v4.600" stroke-width="0.44" opacity=".7"/><path d="M11.2,-5.9v4.600" stroke-width="0.44" opacity=".7"/><path d="M14.3,-6.9v4.600" stroke-width="0.44" opacity=".7"/><path d="M16.8,-8.2v4.600" stroke-width="0.44" opacity=".7"/><path d="M18.7,-9.5v4.600" stroke-width="0.44" opacity=".7"/><path d="M19.8,-11.0v4.600" stroke-width="0.44" opacity=".7"/><polygon points="-16.400,-26.900 -4.300,-21.600 -4.300,-6.800 -16.400,-12.100" fill="#f39839"/><polygon points="-4.300,-21.600 12.500,-23.200 13,-9.500 -4.300,-6.800" fill="#f39839"/><polygon points="12.500,-23.200 16.400,-31.300 16.400,-16 13,-9.500" fill="#e68f33"/><polygon points="-12.300,-34.500 -16.400,-26.900 -4.300,-21.600 12.500,-23.200 16.400,-31.300 9.800,-34.100" fill="#f39839"/><path d="M-9,-36.200V-29.600A9,3.800 0 0 0 9,-29.600V-36.200Z" fill="#f39839"/><path d="M-6.5,-32.500v6" stroke-width="0.44" opacity=".6"/><path d="M-4,-32.500v6" stroke-width="0.44" opacity=".6"/><path d="M-1.5,-32.500v6" stroke-width="0.44" opacity=".6"/><path d="M1.5,-32.500v6" stroke-width="0.44" opacity=".6"/><path d="M4,-32.500v6" stroke-width="0.44" opacity=".6"/><path d="M6.5,-32.500v6" stroke-width="0.44" opacity=".6"/><ellipse cx="0" cy="-36.200" rx="9" ry="3.800" fill="#f39839"/></g>
<g transform="translate(1449.2,644.2) scale(0.906 0.870)" stroke="#4a2c0c" stroke-width="0.61" stroke-linejoin="round"><path d="M-20.200,-12.600A20.200,8 0 0 1 20.200,-12.600V-8A20.200,8 0 0 1 -20.200,-8Z" fill="#f39839"/><ellipse cx="0" cy="-12.600" rx="20.200" ry="8" fill="#f39839"/><path d="M-19.8,-11.0v4.600" stroke-width="0.44" opacity=".7"/><path d="M-18.7,-9.5v4.600" stroke-width="0.44" opacity=".7"/><path d="M-16.8,-8.2v4.600" stroke-width="0.44" opacity=".7"/><path d="M-14.3,-6.9v4.600" stroke-width="0.44" opacity=".7"/><path d="M-11.2,-5.9v4.600" stroke-width="0.44" opacity=".7"/><path d="M-7.7,-5.2v4.600" stroke-width="0.44" opacity=".7"/><path d="M-3.9,-4.8v4.600" stroke-width="0.44" opacity=".7"/><path d="M-0.0,-4.6v4.600" stroke-width="0.44" opacity=".7"/><path d="M3.9,-4.8v4.600" stroke-width="0.44" opacity=".7"/><path d="M7.7,-5.2v4.600" stroke-width="0.44" opacity=".7"/><path d="M11.2,-5.9v4.600" stroke-width="0.44" opacity=".7"/><path d="M14.3,-6.9v4.600" stroke-width="0.44" opacity=".7"/><path d="M16.8,-8.2v4.600" stroke-width="0.44" opacity=".7"/><path d="M18.7,-9.5v4.600" stroke-width="0.44" opacity=".7"/><path d="M19.8,-11.0v4.600" stroke-width="0.44" opacity=".7"/><polygon points="-16.400,-26.900 -4.300,-21.600 -4.300,-6.800 -16.400,-12.100" fill="#f39839"/><polygon points="-4.300,-21.600 12.500,-23.200 13,-9.500 -4.300,-6.800" fill="#f39839"/><polygon points="12.500,-23.200 16.400,-31.300 16.400,-16 13,-9.500" fill="#e68f33"/><polygon points="-12.300,-34.500 -16.400,-26.900 -4.300,-21.600 12.500,-23.200 16.400,-31.300 9.800,-34.100" fill="#f39839"/><path d="M-9,-36.200V-29.600A9,3.800 0 0 0 9,-29.600V-36.200Z" fill="#f39839"/><path d="M-6.5,-32.500v6" stroke-width="0.44" opacity=".6"/><path d="M-4,-32.500v6" stroke-width="0.44" opacity=".6"/><path d="M-1.5,-32.500v6" stroke-width="0.44" opacity=".6"/><path d="M1.5,-32.500v6" stroke-width="0.44" opacity=".6"/><path d="M4,-32.500v6" stroke-width="0.44" opacity=".6"/><path d="M6.5,-32.500v6" stroke-width="0.44" opacity=".6"/><ellipse cx="0" cy="-36.200" rx="9" ry="3.800" fill="#f39839"/></g>
<g transform="translate(1262.1,676.4) scale(0.940 0.935)" stroke="#4a2c0c" stroke-width="0.59" stroke-linejoin="round"><path d="M-20.200,-12.600A20.200,8 0 0 1 20.200,-12.600V-8A20.200,8 0 0 1 -20.200,-8Z" fill="#f39839"/><ellipse cx="0" cy="-12.600" rx="20.200" ry="8" fill="#f39839"/><path d="M-19.8,-11.0v4.600" stroke-width="0.43" opacity=".7"/><path d="M-18.7,-9.5v4.600" stroke-width="0.43" opacity=".7"/><path d="M-16.8,-8.2v4.600" stroke-width="0.43" opacity=".7"/><path d="M-14.3,-6.9v4.600" stroke-width="0.43" opacity=".7"/><path d="M-11.2,-5.9v4.600" stroke-width="0.43" opacity=".7"/><path d="M-7.7,-5.2v4.600" stroke-width="0.43" opacity=".7"/><path d="M-3.9,-4.8v4.600" stroke-width="0.43" opacity=".7"/><path d="M-0.0,-4.6v4.600" stroke-width="0.43" opacity=".7"/><path d="M3.9,-4.8v4.600" stroke-width="0.43" opacity=".7"/><path d="M7.7,-5.2v4.600" stroke-width="0.43" opacity=".7"/><path d="M11.2,-5.9v4.600" stroke-width="0.43" opacity=".7"/><path d="M14.3,-6.9v4.600" stroke-width="0.43" opacity=".7"/><path d="M16.8,-8.2v4.600" stroke-width="0.43" opacity=".7"/><path d="M18.7,-9.5v4.600" stroke-width="0.43" opacity=".7"/><path d="M19.8,-11.0v4.600" stroke-width="0.43" opacity=".7"/><polygon points="-16.400,-26.900 -4.300,-21.600 -4.300,-6.800 -16.400,-12.100" fill="#f39839"/><polygon points="-4.300,-21.600 12.500,-23.200 13,-9.500 -4.300,-6.800" fill="#f39839"/><polygon points="12.500,-23.200 16.400,-31.300 16.400,-16 13,-9.500" fill="#e68f33"/><polygon points="-12.300,-34.500 -16.400,-26.900 -4.300,-21.600 12.500,-23.200 16.400,-31.300 9.800,-34.100" fill="#f39839"/><path d="M-9,-36.200V-29.600A9,3.800 0 0 0 9,-29.600V-36.200Z" fill="#f39839"/><path d="M-6.5,-32.500v6" stroke-width="0.43" opacity=".6"/><path d="M-4,-32.500v6" stroke-width="0.43" opacity=".6"/><path d="M-1.5,-32.500v6" stroke-width="0.43" opacity=".6"/><path d="M1.5,-32.500v6" stroke-width="0.43" opacity=".6"/><path d="M4,-32.500v6" stroke-width="0.43" opacity=".6"/><path d="M6.5,-32.500v6" stroke-width="0.43" opacity=".6"/><ellipse cx="0" cy="-36.200" rx="9" ry="3.800" fill="#f39839"/></g>
<g transform="translate(1327.4,705.6) scale(1.000 0.990)" stroke="#4a2c0c" stroke-width="0.55" stroke-linejoin="round"><path d="M-20.200,-12.600A20.200,8 0 0 1 20.200,-12.600V-8A20.200,8 0 0 1 -20.200,-8Z" fill="#f39839"/><ellipse cx="0" cy="-12.600" rx="20.200" ry="8" fill="#f39839"/><path d="M-19.8,-11.0v4.600" stroke-width="0.40" opacity=".7"/><path d="M-18.7,-9.5v4.600" stroke-width="0.40" opacity=".7"/><path d="M-16.8,-8.2v4.600" stroke-width="0.40" opacity=".7"/><path d="M-14.3,-6.9v4.600" stroke-width="0.40" opacity=".7"/><path d="M-11.2,-5.9v4.600" stroke-width="0.40" opacity=".7"/><path d="M-7.7,-5.2v4.600" stroke-width="0.40" opacity=".7"/><path d="M-3.9,-4.8v4.600" stroke-width="0.40" opacity=".7"/><path d="M-0.0,-4.6v4.600" stroke-width="0.40" opacity=".7"/><path d="M3.9,-4.8v4.600" stroke-width="0.40" opacity=".7"/><path d="M7.7,-5.2v4.600" stroke-width="0.40" opacity=".7"/><path d="M11.2,-5.9v4.600" stroke-width="0.40" opacity=".7"/><path d="M14.3,-6.9v4.600" stroke-width="0.40" opacity=".7"/><path d="M16.8,-8.2v4.600" stroke-width="0.40" opacity=".7"/><path d="M18.7,-9.5v4.600" stroke-width="0.40" opacity=".7"/><path d="M19.8,-11.0v4.600" stroke-width="0.40" opacity=".7"/><polygon points="-16.400,-26.900 -4.300,-21.600 -4.300,-6.800 -16.400,-12.100" fill="#f39839"/><polygon points="-4.300,-21.600 12.500,-23.200 13,-9.500 -4.300,-6.800" fill="#f39839"/><polygon points="12.500,-23.200 16.400,-31.300 16.400,-16 13,-9.500" fill="#e68f33"/><polygon points="-12.300,-34.500 -16.400,-26.900 -4.300,-21.600 12.500,-23.200 16.400,-31.300 9.800,-34.100" fill="#f39839"/><path d="M-9,-36.200V-29.600A9,3.800 0 0 0 9,-29.600V-36.200Z" fill="#f39839"/><path d="M-6.5,-32.500v6" stroke-width="0.40" opacity=".6"/><path d="M-4,-32.500v6" stroke-width="0.40" opacity=".6"/><path d="M-1.5,-32.500v6" stroke-width="0.40" opacity=".6"/><path d="M1.5,-32.500v6" stroke-width="0.40" opacity=".6"/><path d="M4,-32.500v6" stroke-width="0.40" opacity=".6"/><path d="M6.5,-32.500v6" stroke-width="0.40" opacity=".6"/><ellipse cx="0" cy="-36.200" rx="9" ry="3.800" fill="#f39839"/></g></g>
<g><path d="M1252.200,288.500L1401.100,304M1257,304L1397.700,288.100" stroke="#555" stroke-width="1" stroke-dasharray="8.800 9.800" fill="none"/>
<path d="M1354.900,264.600C1359,259 1365,255.200 1371.600,255.200C1384,255.200 1392.500,267 1396.100,280.900" stroke="#3d3d2a" stroke-width="9" fill="none"/>
<path d="M1354.900,264.600C1359,259 1365,255.200 1371.600,255.200C1384,255.200 1392.500,267 1396.100,280.900" stroke="#f5f08c" stroke-width="7.800" fill="none"/>
<path d="M1354.900,264.600C1359,259 1365,255.200 1371.600,255.200C1384,255.200 1392.500,267 1396.100,280.900" stroke="#3d3d2a" stroke-width=".5" fill="none" stroke-dasharray="1.500 1.500" opacity=".7"/>
<ellipse cx="1396.200" cy="281" rx="4.300" ry="1.700" transform="rotate(-14 1396.200 281)" fill="#f5f08c" stroke="#3d3d2a" stroke-width=".6"/>
<rect x="1322.200" y="190.200" width="8.900" height="72" fill="#f5f08c" stroke="#3d3d2a" stroke-width=".7"/>
<path d="M1326.700,192V261" stroke="#3d3d2a" stroke-width=".6" stroke-dasharray="3 2.500"/>
<polygon points="1310.300,261.300 1335.500,260.900 1327,295.600" fill="#f5f08c" stroke="#3d3d2a" stroke-width=".7" stroke-linejoin="round"/>
<path d="M1310.300,261.300Q1322,258.300 1335.500,260.900Q1322,263.500 1310.300,261.300Z" fill="#8f8d55" stroke="#3d3d2a" stroke-width=".5"/>
<path d="M1315,262L1327,295.600" stroke="#3d3d2a" stroke-width=".35" opacity=".6"/>
<path d="M1319.5,262L1327,295.600" stroke="#3d3d2a" stroke-width=".35" opacity=".6"/>
<path d="M1324,262L1327,295.600" stroke="#3d3d2a" stroke-width=".35" opacity=".6"/>
<path d="M1328.5,262L1327,295.600" stroke="#3d3d2a" stroke-width=".35" opacity=".6"/>
<path d="M1332,262L1327,295.600" stroke="#3d3d2a" stroke-width=".35" opacity=".6"/>
<rect x="1322.500" y="255" width="8.300" height="7" fill="#f5f08c"/>
<path d="M1322.200,255V262M1331.100,255V262" stroke="#3d3d2a" stroke-width=".7"/>
<polygon points="1333.100,298.300 1335.200,260.200 1341.300,258.600 1352.800,262.700 1363,272.400 1365.100,277.900 1361.700,282.200" fill="#f5f08c" stroke="#3d3d2a" stroke-width=".7" stroke-linejoin="round"/>
<path d="M1338,259.3L1333.100,298.300" stroke="#3d3d2a" stroke-width=".35" opacity=".6"/>
<path d="M1341.3,258.6L1333.100,298.300" stroke="#3d3d2a" stroke-width=".35" opacity=".6"/>
<path d="M1347,260.5L1333.100,298.300" stroke="#3d3d2a" stroke-width=".35" opacity=".6"/>
<path d="M1352.8,262.7L1333.100,298.300" stroke="#3d3d2a" stroke-width=".35" opacity=".6"/>
<path d="M1358,267.5L1333.100,298.300" stroke="#3d3d2a" stroke-width=".35" opacity=".6"/>
<path d="M1363,272.4L1333.100,298.300" stroke="#3d3d2a" stroke-width=".35" opacity=".6"/>
<path d="M1365.1,277.9L1333.100,298.300" stroke="#3d3d2a" stroke-width=".35" opacity=".6"/></g>
<g font-weight="700" font-size="10.800" fill="#1a202c">
<text x="1519" y="357.500">N<tspan font-size="7.500" dy="2">x</tspan><tspan dy="-2">:</tspan></text><text x="1519" y="374">25.0 kN</text>
<text x="1575" y="363">M<tspan font-size="7.500" dy="2">z</tspan><tspan dy="-2">:</tspan></text><text x="1575" y="379.800">75.0 kN-m</text></g>
<g fill="none" stroke="#2a2a2a" stroke-width=".7">
<path d="M1742.100,236.300A56.900,22.600 0 1 0 1855.900,236.300A56.900,22.600 0 1 0 1742.100,236.300ZM1757.100,233.800A42,16.600 0 1 1 1841.100,233.800A42,16.600 0 1 1 1757.100,233.800Z" fill="#fff" fill-opacity=".4" fill-rule="evenodd" stroke="none"/>
<ellipse cx="1799" cy="236.300" rx="56.900" ry="22.600"/>
<ellipse cx="1799.100" cy="233.800" rx="42" ry="16.600"/>
<defs><linearGradient id="cf" x1="0" y1="0" x2="0" y2="1"><stop offset="0" stop-color="#fff"/><stop offset=".62" stop-color="#fff"/><stop offset="1" stop-color="#fff" stop-opacity=".25"/></linearGradient>
<linearGradient id="cs" x1="0" y1="0" x2="0" y2="1"><stop offset="0" stop-color="#222"/><stop offset=".6" stop-color="#222"/><stop offset="1" stop-color="#222" stop-opacity=".15"/></linearGradient></defs>
<polygon points="1764.900,209.400 1799.900,219 1800.100,268.400 1767.500,251.600" fill="url(#cf)" stroke="none"/>
<polygon points="1832.400,208.600 1799.900,219 1800.100,268.400 1830,250.500" fill="url(#cf)" stroke="none"/>
<polygon points="1798,201.100 1832.400,208.600 1799.900,219 1764.900,209.400" fill="#fff"/>
<path d="M1764.900,209.400L1767.500,251.600M1832.400,208.600L1830,250.500" stroke="url(#cs)" stroke-width=".6"/>
<path d="M1799.900,219L1800.100,268.400" stroke-width=".7"/>
<path d="M1767.500,251.600L1800.100,268.400L1830,250.500" stroke-width=".5" opacity=".45"/>
<path d="M1742.100,236.300A56.900,22.600 0 0 0 1855.900,236.300" />
<path d="M1757.100,233.800A42,16.600 0 0 0 1841.100,233.800" opacity=".55"/>
</g>
<text transform="translate(1756.800 247.200) rotate(58) scale(1 .6)" text-anchor="middle" y="3" font-size="11" font-weight="700" fill="#111">Y</text>
<text transform="translate(1839.200 245.400) rotate(-22) skewX(-28) scale(1.250 .75)" text-anchor="middle" y="3.500" font-size="9" font-weight="700" fill="#111">Z</text>
<g><rect x="1727.200" y="863.700" width="144.300" height="144.300" fill="#d2e6fa" stroke="#78818c" stroke-width="1.400"/>
<circle cx="1742.8" cy="876.500" r="3.400" fill="#f19135"/>
<circle cx="1742.8" cy="995.200" r="3.400" fill="#f19135"/>
<circle cx="1771.4" cy="876.500" r="3.400" fill="#f19135"/>
<circle cx="1771.4" cy="995.200" r="3.400" fill="#f19135"/>
<circle cx="1799.1" cy="876.500" r="3.400" fill="#f19135"/>
<circle cx="1799.1" cy="995.200" r="3.400" fill="#f19135"/>
<circle cx="1826.6" cy="876.500" r="3.400" fill="#f19135"/>
<circle cx="1826.6" cy="995.200" r="3.400" fill="#f19135"/>
<circle cx="1855.4" cy="876.500" r="3.400" fill="#f19135"/>
<circle cx="1855.4" cy="995.200" r="3.400" fill="#f19135"/>
<circle cx="1742.800" cy="936" r="3.400" fill="#f19135"/><circle cx="1855.400" cy="916.200" r="3.400" fill="#f19135"/><circle cx="1855.400" cy="955.500" r="3.400" fill="#f19135"/>
<rect x="1765.900" y="900.300" width="66.400" height="8.900" fill="#6a6f76"/><rect x="1765.900" y="903" width="66.400" height="3.500" fill="#3aa0f4"/>
<rect x="1765.900" y="962.700" width="66.400" height="8.900" fill="#6a6f76"/><rect x="1765.900" y="965.400" width="66.400" height="3.500" fill="#3aa0f4"/>
<rect x="1795.400" y="909" width="7.400" height="54" fill="#6a6f76"/><rect x="1797.600" y="905" width="3" height="62" fill="#3aa0f4"/>
<rect x="1792.600" y="906.500" width="13" height="2.900" fill="#d9ebfb"/><rect x="1792.600" y="962.500" width="13" height="2.900" fill="#d9ebfb"/>
<path d="M1793.400,906.300h11.400c-1.400,.9-2,2.200-2,4.400h-7.400c0-2.200-.6-3.500-2-4.400z" fill="#3aa0f4"/><path d="M1793.400,965.600h11.400c-1.400,-.9-2,-2.200-2,-4.400h-7.400c0,2.200-.6,3.500-2,4.400z" fill="#3aa0f4"/>
<path d="M1769,936H1830" stroke="#676c74" stroke-width="1.500" stroke-dasharray="3.600 3"/>
<path d="M1799.100,901V971" stroke="#2a3b55" stroke-width=".9" stroke-dasharray="2.600 2"/>
<g font-size="9" fill="#111"><text x="1796" y="900.200">Y</text><text x="1796" y="976.300">Y</text><text x="1760.500" y="937.800">Z</text><text x="1832" y="937.800">Z</text></g></g>
</svg><!--/SCENE-->
<!--INFO--><div style="position:absolute;left:780.5px;top:177.600px;font-size:10.800px;line-height:18px;color:#4a5568;white-space:nowrap">
<div style="height:18px;position:relative"><span style="color:#4a5568">Design code:</span><span style="position:absolute;left:71.500px;color:#2d3748">American</span></div>
<div style="height:18px;position:relative"><span style="color:#e8532b">Profiles</span></div>
<div style="height:18px;position:relative"><span style="color:#4a5568">Column:</span><span style="position:absolute;left:71.500px;color:#2d3748">HP8x36</span></div>
<div style="height:18px;position:relative"><span style="color:#4a5568">Anchor:</span><span style="position:absolute;left:71.500px;color:#2d3748">5/8</span></div>
<div style="height:18px;position:relative"><span style="color:#e8532b">Materials</span></div>
<div style="height:18px;position:relative"><span style="color:#4a5568">Column:</span><span style="position:absolute;left:71.500px;color:#2d3748">A36</span></div>
<div style="height:18px;position:relative"><span style="color:#4a5568">Base plate:</span><span style="position:absolute;left:71.500px;color:#2d3748">A36</span></div>
<div style="height:18px;position:relative"><span style="color:#4a5568">Stiffeners:</span><span style="position:absolute;left:71.500px;color:#2d3748">A36</span></div>
<div style="height:18px;position:relative"><span style="color:#4a5568">Anchors:</span><span style="position:absolute;left:71.500px;color:#2d3748">A325</span></div>
<div style="height:18px;position:relative"><span style="color:#4a5568">Foundation:</span><span style="position:absolute;left:71.500px;color:#2d3748">3000</span></div>
<div style="height:18px;position:relative"><span style="color:#4a5568">Grouting:</span><span style="position:absolute;left:71.500px;color:#2d3748">3000</span></div>
<div style="height:18px;position:relative"><span style="color:#e8532b">Units:</span><span style="position:absolute;left:71.500px;color:#2d3748">metric</span></div>
</div><!--/INFO-->
<div id="vbar" class="abs"></div>
</body>
</html>
